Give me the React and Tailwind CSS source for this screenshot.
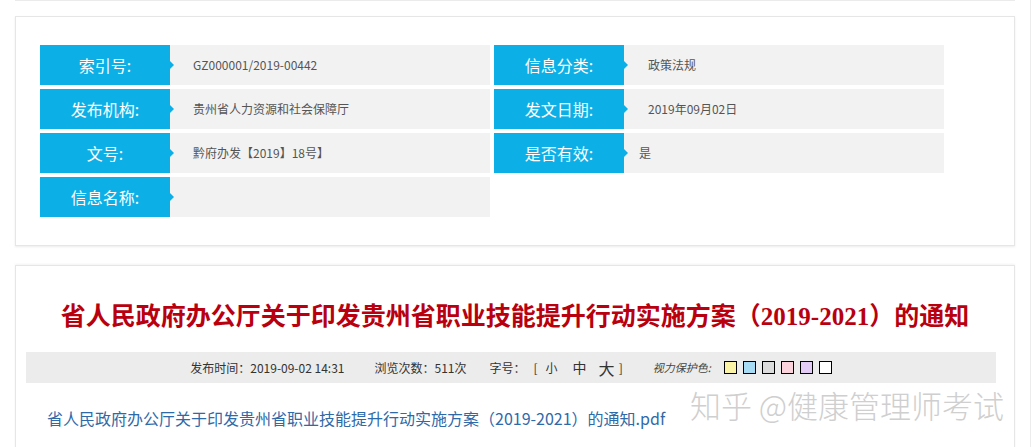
const rowsLeft = [
  { label: "索引号:", value: "GZ000001/2019-00442" },
  { label: "发布机构:", value: "贵州省人力资源和社会保障厅" },
  { label: "文号:", value: "黔府办发【2019】18号】" },
  { label: "信息名称:", value: "" },
];

const rowsRight = [
  { label: "信息分类:", value: "政策法规" },
  { label: "发文日期:", value: "2019年09月02日" },
  { label: "是否有效:", value: "是", pad: "pl-[15px] text-[#222]" },
];

const swatches = ["bg-[#fbf3a6]", "bg-[#a8dcf4]", "bg-[#dcdcdc]", "bg-[#fbd3dc]", "bg-[#e3cdf7]", "bg-white"];

function InfoRow({ label, value, pad }) {
  return (
    <div className="flex h-10">
      <div className="relative flex w-[130px] items-center justify-center bg-[#0cb0e7] text-[16px] text-white">
        {label}
        <span className="absolute right-[-4px] top-1/2 -translate-y-1/2 border-y-[4px] border-l-[4px] border-y-transparent border-l-[#0cb0e7]" />
      </div>
      <div className={`flex flex-1 items-center bg-[#f2f2f2] text-[12px] text-[#555] ${pad}`}>
        {value}
      </div>
    </div>
  );
}

export default function App() {
  return (
    <div
      className="relative h-[447px] w-[1031px] overflow-hidden border-r border-[#ececec] bg-white"
      style={{ fontFamily: '"Noto Sans CJK SC", "Liberation Sans", sans-serif' }}
    >
      <div className="mx-[15px] h-px bg-[#ebebeb]" />

      {/* info card */}
      <div className="mx-[15px] mt-[15px] h-[230px] border border-[#e6e6e6] px-[24px] pt-[28px] shadow-[0_1px_2px_rgba(0,0,0,0.08)]">
        <div className="flex gap-[4px]">
          <div className="flex w-[450px] flex-col gap-[4px]">
            {rowsLeft.map((r) => (
              <InfoRow key={r.label} {...r} pad="pl-[23px]" />
            ))}
          </div>
          <div className="flex w-[450px] flex-col gap-[4px] self-start">
            {rowsRight.map((r) => (
              <InfoRow key={r.label} pad="pl-[24px]" {...r} />
            ))}
          </div>
        </div>
      </div>

      {/* article card */}
      <div className="mx-[15px] mt-[19px] h-[200px] border border-[#e6e6e6] shadow-[0_-1px_2px_rgba(0,0,0,0.05)]">
        <h1
          className="mt-[33px] text-center text-[25px] leading-[36px] font-semibold text-[#b8000f]"
          style={{ fontFamily: '"Liberation Serif", "Noto Sans CJK SC", serif' }}
        >
          省人民政府办公厅关于印发贵州省职业技能提升行动实施方案（2019-2021）的通知
        </h1>

        <div className="ml-[10px] mr-[18px] mt-[17px] flex h-[31px] items-center justify-center bg-[#ececec] text-[12px] text-[#333]">
          <span>发布时间：2019-09-02 14:31</span>
          <span className="ml-[30px]">浏览次数：511次</span>
          <span className="ml-[23px]">字号：</span>
          <span className="ml-[8px]">[</span>
          <span className="ml-[8px]">小</span>
          <span className="ml-[15px] text-[14px]">中</span>
          <span className="ml-[12px] text-[16px]">大</span>
          <span className="ml-[4px]">]</span>
          <span className="ml-[30px] text-[11px] italic text-[#444]">视力保护色:</span>
          <div className="ml-[13px] flex gap-[6px]">
            {swatches.map((c, i) => (
              <span key={i} className={`h-[13px] w-[13px] border border-black ${c}`} />
            ))}
          </div>
        </div>

        <div className="ml-[31px] mt-[23px] text-[16px] leading-[24px] text-[#2f6aa8]">
          省人民政府办公厅关于印发贵州省职业技能提升行动实施方案（2019-2021）的通知.pdf
        </div>
      </div>

      {/* watermark */}
      <div className="pointer-events-none absolute left-[690px] top-[385px] text-[31px] font-light leading-[40px] text-[#cfcfcf]">
        知乎 @健康管理师考试
      </div>
    </div>
  );
}
